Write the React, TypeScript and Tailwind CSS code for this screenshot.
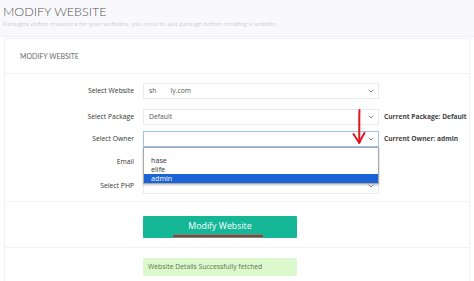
import React from "react";

const Chevron = () => (
    <svg width="6" height="4" viewBox="0 0 6 4" className="absolute right-[4px] top-1/2 -translate-y-1/2">
        <path d="M0.7 0.8 L3 3 L5.3 0.8" fill="none" stroke="#777" strokeWidth="0.9" />
    </svg>
);

interface RowProps {
    label: string;
    className?: string;
    children?: React.ReactNode;
    note?: string;
}

const Row: React.FC<RowProps> = ({label, className, children, note}) => (
    <div className={`flex items-center h-[16px] ${className ?? ""}`}>
        <label className="w-[129px] shrink-0 text-right text-[6.8px] text-[#333]">{label}</label>
        <div className="relative shrink-0 ml-[9px] w-[236px] h-full">{children}</div>
        {note && (
            <span className="ml-[5px] whitespace-nowrap text-[6.6px] font-bold text-[#444]">{note}</span>
        )}
    </div>
);

const SelectBox: React.FC<{value?: string; focused?: boolean}> = ({value, focused}) => (
    <div
        className={`relative h-full bg-white border ${
            focused ? "border-[#9cc4ee]" : "border-[#ebebee]"
        } flex items-center pl-[5px] text-[6.8px] text-[#555] whitespace-pre`}
    >
        {value}
        <Chevron />
    </div>
);

export default function App() {
    return (
        <div className="relative w-[474px] h-[281px] overflow-hidden bg-white font-['Open_Sans',sans-serif]">
            {/* Page header */}
            <div className="h-[37px] bg-[#f9f9fc] border-b border-[#efeff4] px-[3px] pt-[4px]">
                <h1 className="font-['Lato',sans-serif] font-light text-[12.5px] leading-[15px] text-[#555]">
                    MODIFY WEBSITE
                </h1>
                <p className="font-['Lato',sans-serif] font-light text-[6.6px] leading-[9px] text-[#aeaeb6]">
                    Packages define resources for your websites, you need to add package before creating a website.
                </p>
            </div>

            {/* Card */}
            <div className="mx-[4px] mt-[1px] border border-[#f1f1f3] border-b-0 h-[300px]">
                <div className="h-[35px] border-b border-[#f0f0f2] flex items-center pl-[15px] font-['Lato',sans-serif] text-[7px] text-[#6a6a6a]">
                    MODIFY WEBSITE
                </div>

                <div className="pt-[9px] border-b border-[#f3f3f5] pb-[7px]">
                    <Row label="Select Website">
                        <SelectBox value="sh        ly.com" />
                    </Row>
                    <Row label="Select Package" className="mt-[10px]" note="Current Package: Default">
                        <SelectBox value="Default" />
                    </Row>
                    <Row label="Select Owner" className="mt-[6px]" note="Current Owner: admin">
                        <SelectBox focused />
                        {/* open dropdown */}
                        <div className="absolute z-10 left-0 top-[16px] w-[236px] h-[37px] bg-white border border-[#a8a8a8] shadow-[0_1px_2px_rgba(0,0,0,0.25)] pt-[8px] text-[7.2px] leading-[9px] text-[#333]">
                            <div className="pl-[7px]">hase</div>
                            <div className="pl-[7px]">elife</div>
                            <div className="pl-[7px] bg-[#1a63d6] text-white">admin</div>
                        </div>
                    </Row>
                    <Row label="Email" className="mt-[7px]">
                        <SelectBox />
                    </Row>
                    <Row label="Select PHP" className="mt-[8px]">
                        <SelectBox />
                    </Row>
                </div>

                <div className="relative pt-[9px] pb-[9px] border-b border-[#f3f3f5]">
                    <button className="ml-[138px] w-[154px] h-[22px] rounded-[1px] bg-[#16b797] text-white text-[8.8px] font-medium">
                        Modify Website
                    </button>
                    <div className="absolute left-[168px] top-[33px] w-[90px] h-[2px] bg-[#d8202a]" />
                </div>

                <div className="pt-[10px]">
                    <div className="ml-[138px] w-[154px] h-[18px] bg-[#dbf9cc] rounded-[1px] flex items-center pl-[5px] text-[6.8px] text-[#5b7650]">
                        Website Details Successfully fetched
                    </div>
                </div>
            </div>

            {/* hand drawn annotation arrow */}
            <svg width="20" height="40" viewBox="0 0 20 40" className="absolute left-[350px] top-[107px] pointer-events-none">
                <path d="M9.5 3 C9 12 9.5 22 9.2 35" fill="none" stroke="#e0161e" strokeWidth="2" strokeLinecap="round" />
                <path d="M3.5 27 C5.5 30 7.5 33 9.2 36 C11 32 12.5 29 14.5 26" fill="none" stroke="#e0161e" strokeWidth="2" strokeLinecap="round" strokeLinejoin="round" />
            </svg>
        </div>
    );
}
